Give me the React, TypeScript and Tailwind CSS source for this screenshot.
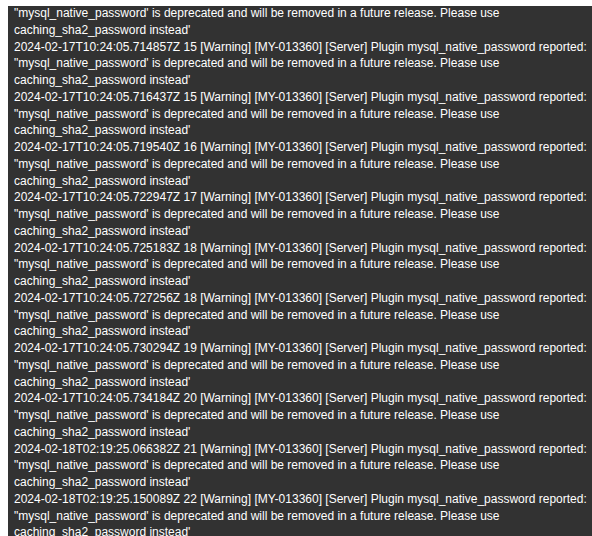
const entries = [
  "2024-02-17T10:24:05.714857Z 15",
  "2024-02-17T10:24:05.716437Z 15",
  "2024-02-17T10:24:05.719540Z 16",
  "2024-02-17T10:24:05.722947Z 17",
  "2024-02-17T10:24:05.725183Z 18",
  "2024-02-17T10:24:05.727256Z 18",
  "2024-02-17T10:24:05.730294Z 19",
  "2024-02-17T10:24:05.734184Z 20",
  "2024-02-18T02:19:25.066382Z 21",
  "2024-02-18T02:19:25.150089Z 22",
];

const Tail = () => (
  <>
    <div>"mysql_native_password' is deprecated and will be removed in a future release. Please use</div>
    <div>caching_sha2_password instead'</div>
  </>
);

const App = () => {
  return (
    <div className="h-[536px] w-[592px] overflow-hidden bg-white pl-2 pt-[6px]">
      <div className="h-full overflow-hidden bg-[#323232] px-[6px]">
        <div className="-mt-[1px] whitespace-nowrap text-[12px] leading-[16.75px] text-white font-['Liberation_Sans',Arial,sans-serif]">
          <Tail />
          {entries.map((e) => (
            <div key={e}>
              <div>{e} [Warning] [MY-013360] [Server] Plugin mysql_native_password reported:</div>
              <Tail />
            </div>
          ))}
        </div>
      </div>
    </div>
  );
};

export default App;
